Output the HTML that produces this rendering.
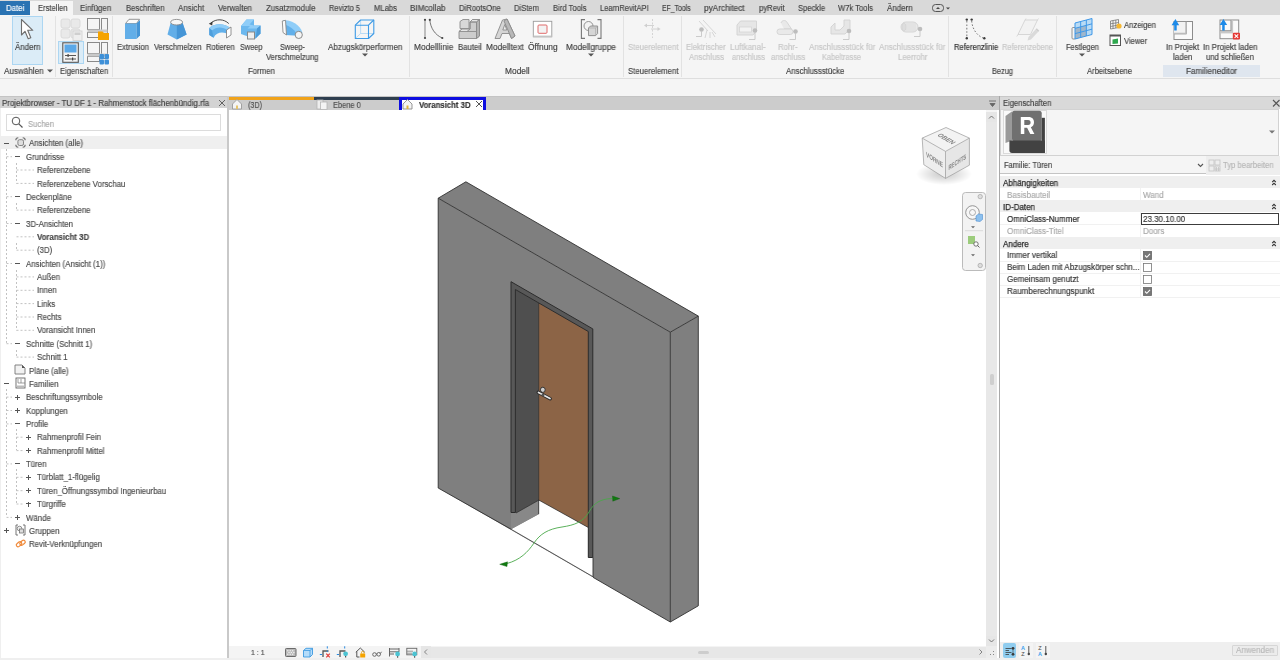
<!DOCTYPE html>
<html><head><meta charset="utf-8"><style>
html,body{margin:0;padding:0}
body{width:1280px;height:660px;position:relative;overflow:hidden;background:#f5f5f5;font-family:"Liberation Sans",sans-serif}
.t{position:absolute;white-space:pre;line-height:10px;will-change:transform;-webkit-text-stroke:0.15px currentColor}
svg{overflow:visible}
</style></head><body>
<div style="position:absolute;left:0px;top:0px;width:1280px;height:15px;background:#d9d9d9"></div>
<div style="position:absolute;left:0px;top:15px;width:1280px;height:63px;background:#f5f5f5"></div>
<div style="position:absolute;left:0px;top:78px;width:1280px;height:1px;background:#dedede"></div>
<div style="position:absolute;left:0px;top:79px;width:1280px;height:17px;background:#f5f5f5"></div>
<div style="position:absolute;left:0px;top:96px;width:1280px;height:14px;background:#d3d3d3"></div>
<div style="position:absolute;left:0px;top:96px;width:1280px;height:1px;background:#c4c4c4"></div>
<div style="position:absolute;left:0px;top:1px;width:30px;height:14px;background:#2a73b3"></div>
<div style="position:absolute;left:30px;top:1px;width:43px;height:14px;background:#f5f5f5"></div>
<div class="t" style="left:5.7px;top:3.05px;font-size:8.4px;color:#ffffff;transform:scaleX(0.935);transform-origin:0 0;">Datei</div>
<div class="t" style="left:38.0px;top:3.05px;font-size:8.4px;color:#404040;transform:scaleX(0.905);transform-origin:0 0;">Erstellen</div>
<div class="t" style="left:80.4px;top:3.05px;font-size:8.4px;color:#404040;transform:scaleX(0.944);transform-origin:0 0;">Einfügen</div>
<div class="t" style="left:125.5px;top:3.05px;font-size:8.4px;color:#404040;transform:scaleX(0.919);transform-origin:0 0;">Beschriften</div>
<div class="t" style="left:178.0px;top:3.05px;font-size:8.4px;color:#404040;transform:scaleX(0.947);transform-origin:0 0;">Ansicht</div>
<div class="t" style="left:218.0px;top:3.05px;font-size:8.4px;color:#404040;transform:scaleX(0.924);transform-origin:0 0;">Verwalten</div>
<div class="t" style="left:265.5px;top:3.05px;font-size:8.4px;color:#404040;transform:scaleX(0.941);transform-origin:0 0;">Zusatzmodule</div>
<div class="t" style="left:329.0px;top:3.05px;font-size:8.4px;color:#404040;transform:scaleX(0.888);transform-origin:0 0;">Revizto 5</div>
<div class="t" style="left:373.6px;top:3.05px;font-size:8.4px;color:#404040;transform:scaleX(0.911);transform-origin:0 0;">MLabs</div>
<div class="t" style="left:410.0px;top:3.05px;font-size:8.4px;color:#404040;transform:scaleX(0.965);transform-origin:0 0;">BIMcollab</div>
<div class="t" style="left:458.7px;top:3.05px;font-size:8.4px;color:#404040;transform:scaleX(0.914);transform-origin:0 0;">DiRootsOne</div>
<div class="t" style="left:514.0px;top:3.05px;font-size:8.4px;color:#404040;transform:scaleX(0.910);transform-origin:0 0;">DiStem</div>
<div class="t" style="left:552.5px;top:3.05px;font-size:8.4px;color:#404040;transform:scaleX(0.915);transform-origin:0 0;">Bird Tools</div>
<div class="t" style="left:600.0px;top:3.05px;font-size:8.4px;color:#404040;transform:scaleX(0.900);transform-origin:0 0;">LearnRevitAPI</div>
<div class="t" style="left:662.4px;top:3.05px;font-size:8.4px;color:#404040;transform:scaleX(0.819);transform-origin:0 0;">EF_Tools</div>
<div class="t" style="left:704.4px;top:3.05px;font-size:8.4px;color:#404040;transform:scaleX(0.980);transform-origin:0 0;">pyArchitect</div>
<div class="t" style="left:758.6px;top:3.05px;font-size:8.4px;color:#404040;transform:scaleX(0.920);transform-origin:0 0;">pyRevit</div>
<div class="t" style="left:797.7px;top:3.05px;font-size:8.4px;color:#404040;transform:scaleX(0.909);transform-origin:0 0;">Speckle</div>
<div class="t" style="left:838.0px;top:3.05px;font-size:8.4px;color:#404040;transform:scaleX(0.909);transform-origin:0 0;">W7k Tools</div>
<div class="t" style="left:886.7px;top:3.05px;font-size:8.4px;color:#404040;transform:scaleX(0.951);transform-origin:0 0;">Ändern</div>
<svg style="position:absolute;left:932px;top:4px" width="19" height="8" viewBox="0 0 19 8"><rect x="0.5" y="0.5" width="11" height="7" rx="3" fill="none" stroke="#555"/><path d="M4 5L6 3L8 5Z" fill="#444"/><path d="M14 3.5L18 3.5L16 5.5Z" fill="#444"/></svg>
<div style="position:absolute;left:55px;top:16px;width:1px;height:61px;background:#e2e2e2"></div>
<div style="position:absolute;left:112px;top:16px;width:1px;height:61px;background:#e2e2e2"></div>
<div style="position:absolute;left:409px;top:16px;width:1px;height:61px;background:#e2e2e2"></div>
<div style="position:absolute;left:623px;top:16px;width:1px;height:61px;background:#e2e2e2"></div>
<div style="position:absolute;left:681px;top:16px;width:1px;height:61px;background:#e2e2e2"></div>
<div style="position:absolute;left:948px;top:16px;width:1px;height:61px;background:#e2e2e2"></div>
<div style="position:absolute;left:1056px;top:16px;width:1px;height:61px;background:#e2e2e2"></div>
<div style="position:absolute;left:12px;top:16px;width:31px;height:49px;background:#dbecf7;border:1px solid #acd6f2;box-sizing:border-box"></div>
<svg style="position:absolute;left:20px;top:18px" width="15" height="23" viewBox="0 0 15 23"><path d="M1.5 1.5L1.5 17L5 13.3L8.2 20.8L10.8 19.7L7.7 12.3L12.8 12.3Z" fill="#fff" stroke="#6e6e6e" stroke-width="1.1" stroke-linejoin="round"/></svg>
<div class="t" style="left:14.7px;top:42.15px;font-size:8.4px;color:#404040;transform:scaleX(0.944);transform-origin:0 0;">Ändern</div>
<div class="t" style="left:4.4px;top:66.45px;font-size:8.4px;color:#404040;transform:scaleX(0.966);transform-origin:0 0;">Auswählen</div>
<svg style="position:absolute;left:47px;top:69px" width="6" height="4" viewBox="0 0 6 4"><path d="M0 0.5L6 0.5L3 3.5Z" fill="#555"/></svg>
<svg style="position:absolute;left:60px;top:18px" width="23" height="23" viewBox="0 0 23 23"><g fill="#e9e9e9" stroke="#d6d6d6" stroke-width="0.8"><rect x="1" y="1" width="9" height="9" rx="2"/><rect x="11" y="1" width="9" height="9" rx="2"/><rect x="1" y="11" width="9" height="9" rx="2"/><rect x="11" y="11" width="9" height="9" rx="2"/></g><rect x="13" y="13" width="9" height="9.5" fill="#eee" stroke="#cfcfcf" stroke-width="0.8"/><rect x="14.5" y="14.5" width="6" height="2.5" fill="#cfcfcf"/></svg>
<svg style="position:absolute;left:87px;top:18px" width="23" height="23" viewBox="0 0 23 23"><g fill="none" stroke="#8a8a8a" stroke-width="1"><rect x="0.5" y="0.5" width="12" height="11"/><rect x="14.5" y="0.5" width="6" height="16"/><rect x="0.5" y="14.5" width="12" height="5"/></g><rect x="0.5" y="11.5" width="20" height="3" fill="#c9c9c9"/><path d="M11 13.5L15.5 13.5L17 15L22 15L22 22L11 22Z" fill="#f5a300"/></svg>
<div style="position:absolute;left:58px;top:41px;width:26px;height:23px;background:#dbecf7;border:1px solid #acd6f2;box-sizing:border-box"></div>
<svg style="position:absolute;left:62px;top:42px" width="18" height="21" viewBox="0 0 18 21"><rect x="0.8" y="0.8" width="15.5" height="19.5" fill="#f3f3f3" stroke="#555" stroke-width="1.1"/><rect x="2.5" y="2.5" width="12" height="8" fill="#5aa8e8"/><g stroke="#444" stroke-width="0.9"><path d="M3 13.5H14M3 17H14"/></g><rect x="5.5" y="12" width="1.2" height="3" fill="#444"/><rect x="10" y="15.5" width="1.2" height="3" fill="#444"/></svg>
<svg style="position:absolute;left:87px;top:42px" width="23" height="23" viewBox="0 0 23 23"><g fill="none" stroke="#8a8a8a" stroke-width="1"><rect x="0.5" y="0.5" width="12" height="11"/><rect x="14.5" y="0.5" width="6" height="16"/><rect x="0.5" y="14.5" width="12" height="5"/></g><rect x="0.5" y="11.5" width="20" height="3" fill="#c9c9c9"/><g fill="#3e90d8"><rect x="12.5" y="12" width="4.5" height="5" rx="1"/><rect x="17.5" y="12" width="4.5" height="5" rx="1"/><rect x="12.5" y="17.5" width="4.5" height="5" rx="1"/><rect x="17.5" y="17.5" width="4.5" height="5" rx="1"/></g></svg>
<div class="t" style="left:59.8px;top:66.45px;font-size:8.4px;color:#404040;transform:scaleX(0.909);transform-origin:0 0;">Eigenschaften</div>
<svg style="position:absolute;left:124px;top:18px" width="17" height="23" viewBox="0 0 17 23"><path d="M1.5 5.5L5 1.3L15.5 1.3L12.5 5.5Z" fill="#fafafa" stroke="#8a8a8a" stroke-width="0.9" stroke-linejoin="round"/><rect x="1" y="5.5" width="11.5" height="15.5" fill="#62aee8"/><path d="M12.5 5.5L16 2L16 17.5L12.5 21Z" fill="#4595d6"/></svg>
<div class="t" style="left:117.0px;top:42.15px;font-size:8.4px;color:#404040;transform:scaleX(0.916);transform-origin:0 0;">Extrusion</div>
<svg style="position:absolute;left:167px;top:18px" width="21" height="23" viewBox="0 0 21 23"><path d="M3.6 5L15.6 5L19.6 16.5L9.8 21.6L0.5 16.5Z" fill="#62aee8"/><path d="M9.8 6.5L15.6 5L19.6 16.5L9.8 21.6Z" fill="#4595d6"/><ellipse cx="9.6" cy="4.2" rx="6" ry="2.8" fill="#f7f7f7" stroke="#8a8a8a" stroke-width="0.9"/></svg>
<div class="t" style="left:153.8px;top:42.15px;font-size:8.4px;color:#404040;transform:scaleX(0.903);transform-origin:0 0;">Verschmelzen</div>
<svg style="position:absolute;left:208px;top:18px" width="24" height="22" viewBox="0 0 24 22"><path d="M3 5C8 0.5 16 0.8 20.8 5.6" fill="none" stroke="#3a3a3a" stroke-width="0.9"/><path d="M0.8 5.8L4.6 3.6L4.2 7.4Z" fill="#3a3a3a"/><path d="M1.3 10C6 5 17 5 22 10L22 17.5C17 13.5 9 13 5.6 19.7L1.3 17Z" fill="#62b0ea"/><path d="M1.3 10C6 5 17 5 22 10L19.5 12C15 8.5 8 8.5 4 12.5Z" fill="#8fcdf8"/><path d="M1.3 10L4 12.5L5.6 19.7L1.3 17Z" fill="#4f9fdc"/><path d="M18.5 12L23 9L23 17L18.5 20Z" fill="#fff" stroke="#7a7a7a" stroke-width="0.8"/></svg>
<div class="t" style="left:205.6px;top:42.15px;font-size:8.4px;color:#404040;transform:scaleX(0.910);transform-origin:0 0;">Rotieren</div>
<svg style="position:absolute;left:240px;top:18px" width="22" height="23" viewBox="0 0 22 23"><path d="M1 8L6.5 1.5L14 1.5L14 7.5L20.5 7.5L20.5 15.5L15 21L1 16Z" fill="#6cb8ee"/><path d="M1 8L6.5 1.5L14 1.5L9.5 6.5L14 7.5L20.5 7.5L17 10.5L7.5 10.5L10 8Z" fill="#8fcdf8"/><path d="M17 10.5L20.5 7.5L20.5 15.5L15.5 20.5Z" fill="#4b9ad8"/><rect x="7.5" y="14" width="7" height="7" fill="#efefef" stroke="#8a8a8a" stroke-width="1"/></svg>
<div class="t" style="left:239.6px;top:42.15px;font-size:8.4px;color:#404040;transform:scaleX(0.875);transform-origin:0 0;">Sweep</div>
<svg style="position:absolute;left:281px;top:18px" width="23" height="23" viewBox="0 0 23 23"><path d="M2 2C10 2 19 6 21.5 15L16 17.5L5 17Z" fill="#8fcdf8"/><path d="M5 7C10 9 14 12 16.5 17.5L5 17Z" fill="#62b0ea"/><path d="M1.3 3L4.5 2.3L5.5 17L2 14.5Z" fill="#fafafa" stroke="#8a8a8a" stroke-width="0.9"/><circle cx="17.75" cy="16.9" r="3.6" fill="#f5f5f5" stroke="#8a8a8a" stroke-width="1"/></svg>
<div class="t" style="left:280.0px;top:42.15px;font-size:8.4px;color:#404040;transform:scaleX(0.880);transform-origin:0 0;">Sweep-</div>
<div class="t" style="left:266.2px;top:52.15px;font-size:8.4px;color:#404040;transform:scaleX(0.917);transform-origin:0 0;">Verschmelzung</div>
<svg style="position:absolute;left:354px;top:18px" width="21" height="22" viewBox="0 0 21 22"><g fill="none" stroke="#a9d4f5" stroke-width="0.8"><path d="M6.6 2V15.5H19.8M6.6 15.5L1.3 20.5"/></g><g fill="none" stroke="#3e9be6" stroke-width="1.1" stroke-linejoin="round"><path d="M1.3 7.2L6.6 2H19.8V15.5L14.5 20.5H1.3Z"/><path d="M1.3 7.2H14.5L19.8 2M14.5 7.2V20.5"/></g></svg>
<div class="t" style="left:327.5px;top:42.15px;font-size:8.4px;color:#404040;transform:scaleX(0.957);transform-origin:0 0;">Abzugskörperformen</div>
<svg style="position:absolute;left:362px;top:53px" width="6" height="4" viewBox="0 0 6 4"><path d="M0 0.5L6 0.5L3 3.5Z" fill="#555"/></svg>
<div class="t" style="left:247.5px;top:66.45px;font-size:8.4px;color:#404040;transform:scaleX(0.932);transform-origin:0 0;">Formen</div>
<svg style="position:absolute;left:423px;top:18px" width="22" height="22" viewBox="0 0 22 22"><path d="M2 2V20" stroke="#b0b0b0" stroke-width="1.6"/><path d="M6.8 1.8C7.5 10 12 17 19.3 20" fill="none" stroke="#555" stroke-width="0.8"/><g fill="#444"><circle cx="2" cy="1.8" r="1.1"/><circle cx="2" cy="20" r="1.1"/><circle cx="6.8" cy="1.8" r="1.1"/><circle cx="19.3" cy="20" r="1.1"/></g></svg>
<div class="t" style="left:413.8px;top:42.15px;font-size:8.4px;color:#404040;transform:scaleX(0.992);transform-origin:0 0;">Modelllinie</div>
<svg style="position:absolute;left:458px;top:18px" width="23" height="22" viewBox="0 0 23 22"><g stroke="#8c8c8c" stroke-width="0.9" stroke-linejoin="round"><path d="M1 13.5L4 11L12 11L12 4L14.5 1.5L21.5 1.5L21.5 18L18.5 20.5L1 20.5Z" fill="#cdcdcd"/><path d="M1 13.5L4 11L12 11L9 13.5Z" fill="#e6e6e6"/><path d="M12 4L14.5 1.5L21.5 1.5L18.5 4Z" fill="#e6e6e6"/><path d="M18.5 4L21.5 1.5L21.5 18L18.5 20.5Z" fill="#b3b3b3"/><path d="M9 13.5H18.5M18.5 4V20.5M12 11V4H18.5" fill="none"/><path d="M2 3.5L5 1.5L11 1.5L11 10.5L2 10.5Z" fill="#d8d8d8"/></g></svg>
<div class="t" style="left:457.5px;top:42.15px;font-size:8.4px;color:#404040;transform:scaleX(0.927);transform-origin:0 0;">Bauteil</div>
<svg style="position:absolute;left:494px;top:18px" width="22" height="22" viewBox="0 0 22 22"><g stroke="#8a8a8a" stroke-width="0.9" stroke-linejoin="round"><path d="M1 20.5L8.5 2L13 1L21 18L17.5 20.5L15.5 15.5L8 15.5L6 20.5Z" fill="#d5d5d5"/><path d="M13 1L21 18L17.5 20.5L10 3Z" fill="#b8b8b8"/><path d="M8.8 12L12.8 12L10.8 6.5Z" fill="#efefef"/></g></svg>
<div class="t" style="left:486.0px;top:42.15px;font-size:8.4px;color:#404040;transform:scaleX(0.989);transform-origin:0 0;">Modelltext</div>
<svg style="position:absolute;left:532px;top:20px" width="21" height="19" viewBox="0 0 21 19"><rect x="1.3" y="1.3" width="18.5" height="15.5" fill="#fff" stroke="#9a9a9a" stroke-width="0.9"/><rect x="1.3" y="15.6" width="18.5" height="1.6" fill="#c4c4c4"/><rect x="6" y="5" width="9" height="8.3" rx="1" fill="#f3f3f3" stroke="#e06a6a" stroke-width="1"/></svg>
<div class="t" style="left:528.0px;top:42.15px;font-size:8.4px;color:#404040;">Öffnung</div>
<svg style="position:absolute;left:580px;top:18px" width="22" height="22" viewBox="0 0 22 22"><path d="M5 1.6H1.4V20.4H5M17.5 1.6H21V20.4H17.5" fill="none" stroke="#777" stroke-width="1.1"/><circle cx="8.5" cy="8" r="4.5" fill="#f2f2f2" stroke="#888" stroke-width="0.9"/><path d="M8.5 10L10.5 8L17.6 8L17.6 15.6L15.6 17.6L8.5 17.6Z" fill="#d6d6d6" stroke="#888" stroke-width="0.9"/><path d="M8.5 10H15.6L17.6 8M15.6 10V17.6" fill="none" stroke="#a0a0a0" stroke-width="0.6"/></svg>
<div class="t" style="left:566.0px;top:42.15px;font-size:8.4px;color:#404040;transform:scaleX(0.985);transform-origin:0 0;">Modellgruppe</div>
<svg style="position:absolute;left:588px;top:53px" width="6" height="4" viewBox="0 0 6 4"><path d="M0 0.5L6 0.5L3 3.5Z" fill="#555"/></svg>
<div class="t" style="left:504.8px;top:66.45px;font-size:8.4px;color:#404040;">Modell</div>
<svg style="position:absolute;left:643px;top:18px" width="19" height="22" viewBox="0 0 19 22"><path d="M9.5 1V20" stroke="#d0d0d0" stroke-width="0.9" stroke-dasharray="2 1.5"/><path d="M3 7.5H11M8 11H16" stroke="#cfcfcf" stroke-width="0.9"/><path d="M1 7.5L4 5.5L4 9.5Z M17.5 11L14.5 9L14.5 13Z" fill="#cfcfcf"/></svg>
<div class="t" style="left:627.5px;top:42.15px;font-size:8.4px;color:#c6c6c6;transform:scaleX(0.927);transform-origin:0 0;">Steuerelement</div>
<div class="t" style="left:627.5px;top:66.45px;font-size:8.4px;color:#404040;transform:scaleX(0.927);transform-origin:0 0;">Steuerelement</div>
<svg style="position:absolute;left:695px;top:19px" width="22" height="22" viewBox="0 0 22 22"><path d="M4 2L13 12M8 1L21 15M12 11L10 19M15 13L15 19M17 13L20 18" stroke="#d2d2d2" stroke-width="0.9" fill="none"/><circle cx="6.5" cy="10.5" r="2.3" fill="#bdbdbd"/><path d="M6.5 12V17.5H1" stroke="#c6c6c6" stroke-width="0.9" fill="none"/></svg>
<div class="t" style="left:686.0px;top:42.15px;font-size:8.4px;color:#c6c6c6;transform:scaleX(0.905);transform-origin:0 0;">Elektrischer</div>
<div class="t" style="left:688.8px;top:52.15px;font-size:8.4px;color:#c6c6c6;transform:scaleX(0.917);transform-origin:0 0;">Anschluss</div>
<svg style="position:absolute;left:736px;top:19px" width="23" height="22" viewBox="0 0 23 22"><path d="M1 6L4.5 2L20.5 2L20.5 12L17 16L1 16Z" fill="#e6e6e6" stroke="#d2d2d2" stroke-width="0.9"/><rect x="3.5" y="8" width="12" height="5" fill="#f3f3f3" stroke="#d2d2d2" stroke-width="0.7"/><circle cx="19" cy="11.5" r="2.3" fill="#bdbdbd"/><path d="M19 13V20.5H13" stroke="#c6c6c6" stroke-width="0.9" fill="none"/></svg>
<div class="t" style="left:730.0px;top:42.15px;font-size:8.4px;color:#c6c6c6;transform:scaleX(0.968);transform-origin:0 0;">Luftkanal-</div>
<div class="t" style="left:732.0px;top:52.15px;font-size:8.4px;color:#c6c6c6;transform:scaleX(0.886);transform-origin:0 0;">anschluss</div>
<svg style="position:absolute;left:776px;top:19px" width="24" height="22" viewBox="0 0 24 22"><path d="M5 4C6 1 9 1 10.5 2.5L15.5 10L8 10" fill="#e9e9e9" stroke="#d2d2d2" stroke-width="0.9"/><rect x="1" y="10" width="16" height="5.5" rx="2.7" fill="#e9e9e9" stroke="#d2d2d2" stroke-width="0.9"/><circle cx="19.5" cy="12.5" r="2.3" fill="#bdbdbd"/><path d="M19.5 14V20.5H13.5" stroke="#c6c6c6" stroke-width="0.9" fill="none"/></svg>
<div class="t" style="left:778.0px;top:42.15px;font-size:8.4px;color:#c6c6c6;transform:scaleX(0.931);transform-origin:0 0;">Rohr-</div>
<div class="t" style="left:770.6px;top:52.15px;font-size:8.4px;color:#c6c6c6;transform:scaleX(0.923);transform-origin:0 0;">anschluss</div>
<svg style="position:absolute;left:830px;top:19px" width="23" height="22" viewBox="0 0 23 22"><path d="M1 8L5 4L5 11L10 11L14 7L14 1L20 1L20 10L15 15L1 15Z" fill="#e6e6e6" stroke="#d2d2d2" stroke-width="0.9"/><circle cx="19" cy="12" r="2.3" fill="#bdbdbd"/><path d="M19 13.5V20.5H13" stroke="#c6c6c6" stroke-width="0.9" fill="none"/></svg>
<div class="t" style="left:808.8px;top:42.15px;font-size:8.4px;color:#c6c6c6;transform:scaleX(0.949);transform-origin:0 0;">Anschlussstück für</div>
<div class="t" style="left:822.0px;top:52.15px;font-size:8.4px;color:#c6c6c6;transform:scaleX(0.882);transform-origin:0 0;">Kabeltrasse</div>
<svg style="position:absolute;left:900px;top:19px" width="23" height="22" viewBox="0 0 23 22"><rect x="1" y="3" width="17" height="10" rx="5" fill="#e9e9e9" stroke="#d2d2d2" stroke-width="0.9"/><ellipse cx="4" cy="8" rx="2" ry="4" fill="#ddd" stroke="#d2d2d2" stroke-width="0.7"/><path d="M7 4V12M9 4V12M11 4V12M13 4V12M15 4V12" stroke="#d2d2d2" stroke-width="0.5"/><circle cx="20" cy="10" r="2.3" fill="#bdbdbd"/><path d="M20 11.5V17.5H14" stroke="#c6c6c6" stroke-width="0.9" fill="none"/></svg>
<div class="t" style="left:878.8px;top:42.15px;font-size:8.4px;color:#c6c6c6;transform:scaleX(0.949);transform-origin:0 0;">Anschlussstück für</div>
<div class="t" style="left:897.5px;top:52.15px;font-size:8.4px;color:#c6c6c6;transform:scaleX(0.932);transform-origin:0 0;">Leerrohr</div>
<div class="t" style="left:786.0px;top:66.45px;font-size:8.4px;color:#404040;transform:scaleX(0.936);transform-origin:0 0;">Anschlussstücke</div>
<svg style="position:absolute;left:965px;top:18px" width="21" height="23" viewBox="0 0 21 23"><path d="M1.8 3V19" stroke="#8a8a8a" stroke-width="1.2" stroke-dasharray="1.6 1.8"/><path d="M6.7 3C7.2 10 11 17 18 20" fill="none" stroke="#6a6a6a" stroke-width="0.9" stroke-dasharray="1.6 1.8"/><g fill="#3a3a3a"><circle cx="1.8" cy="1.6" r="1.2"/><circle cx="1.8" cy="20.3" r="1.2"/><circle cx="6.7" cy="1.6" r="1.2"/><circle cx="19.3" cy="20.3" r="1.2"/></g></svg>
<div class="t" style="left:953.8px;top:42.15px;font-size:8.4px;color:#2f2f2f;transform:scaleX(0.905);transform-origin:0 0;">Referenzlinie</div>
<svg style="position:absolute;left:1016px;top:18px" width="24" height="23" viewBox="0 0 24 23"><path d="M9 2H21.5L14.5 16.5H2Z" fill="#f2f2f2" stroke="#d2d2d2" stroke-width="0.9"/><path d="M2 16.5L0.8 18.5M9 2L10 0.5M21.5 2L22.5 0.5" stroke="#d2d2d2" stroke-width="0.8"/><path d="M12.5 19L19.5 11.5L22 14L15 21.5L11.5 22.5Z" fill="#dadada"/><path d="M19.5 11.5L20.8 10.2L23.3 12.7L22 14Z" fill="#cfcfcf"/></svg>
<div class="t" style="left:1002.0px;top:42.15px;font-size:8.4px;color:#c6c6c6;transform:scaleX(0.890);transform-origin:0 0;">Referenzebene</div>
<div class="t" style="left:992.0px;top:66.45px;font-size:8.4px;color:#404040;transform:scaleX(0.884);transform-origin:0 0;">Bezug</div>
<svg style="position:absolute;left:1071px;top:18px" width="22" height="23" viewBox="0 0 22 23"><path d="M4 9.5H2Q1 9.5 1 10.5V20Q1 21 2 21H4" fill="none" stroke="#8a8a8a" stroke-width="0.9"/><path d="M4.00 5.00 L9.67 3.50 L9.67 8.83 L4.00 10.33Z" fill="#b9dbf5"/><path d="M4.00 10.33 L9.67 8.83 L9.67 14.17 L4.00 15.67Z" fill="#9fb6cb"/><path d="M4.00 15.67 L9.67 14.17 L9.67 19.50 L4.00 21.00Z" fill="#9fb6cb"/><path d="M9.67 3.50 L15.33 2.00 L15.33 7.33 L9.67 8.83Z" fill="#b9dbf5"/><path d="M9.67 8.83 L15.33 7.33 L15.33 12.67 L9.67 14.17Z" fill="#9fb6cb"/><path d="M9.67 14.17 L15.33 12.67 L15.33 18.00 L9.67 19.50Z" fill="#9fb6cb"/><path d="M15.33 2.00 L21.00 0.50 L21.00 5.83 L15.33 7.33Z" fill="#b9dbf5"/><path d="M15.33 7.33 L21.00 5.83 L21.00 11.17 L15.33 12.67Z" fill="#b9dbf5"/><path d="M15.33 12.67 L21.00 11.17 L21.00 16.50 L15.33 18.00Z" fill="#b9dbf5"/><g stroke="#3d97e8" stroke-width="1" fill="none"><path d="M4.00 5.00L4.00 21.00"/><path d="M9.67 3.50L9.67 19.50"/><path d="M15.33 2.00L15.33 18.00"/><path d="M21.00 0.50L21.00 16.50"/><path d="M4.00 5.00L21.00 0.50"/><path d="M4.00 10.33L21.00 5.83"/><path d="M4.00 15.67L21.00 11.17"/><path d="M4.00 21.00L21.00 16.50"/></g></svg>
<div class="t" style="left:1066.0px;top:42.15px;font-size:8.4px;color:#404040;transform:scaleX(0.897);transform-origin:0 0;">Festlegen</div>
<svg style="position:absolute;left:1079px;top:53px" width="6" height="4" viewBox="0 0 6 4"><path d="M0 0.5L6 0.5L3 3.5Z" fill="#555"/></svg>
<svg style="position:absolute;left:1109px;top:18px" width="13" height="13" viewBox="0 0 13 13"><g fill="none" stroke="#777" stroke-width="0.8"><path d="M1.5 3L9.5 1.5V9.5L1.5 11Z M4 2.5V10.5M6.8 2V10M1.5 5.8L9.5 4.5M1.5 8.5L9.5 7"/></g><circle cx="10" cy="8" r="2.6" fill="#f5b731"/></svg>
<div class="t" style="left:1124.0px;top:19.65px;font-size:8.4px;color:#404040;transform:scaleX(0.916);transform-origin:0 0;">Anzeigen</div>
<svg style="position:absolute;left:1109px;top:34px" width="13" height="13" viewBox="0 0 13 13"><rect x="1" y="1" width="10.5" height="10.5" fill="#fff" stroke="#555" stroke-width="1"/><rect x="1" y="1" width="10.5" height="1.5" fill="#555"/><path d="M3.5 5.5L9 4.5L9 9.5L3.5 10Z" fill="#2fa84f"/></svg>
<div class="t" style="left:1124.0px;top:35.65px;font-size:8.4px;color:#404040;transform:scaleX(0.904);transform-origin:0 0;">Viewer</div>
<div class="t" style="left:1087.0px;top:66.45px;font-size:8.4px;color:#404040;transform:scaleX(0.912);transform-origin:0 0;">Arbeitsebene</div>
<svg style="position:absolute;left:1171px;top:18px" width="23" height="23" viewBox="0 0 23 23"><rect x="3" y="3.5" width="18.5" height="18" fill="#fafafa" stroke="#8c8c8c" stroke-width="1"/><path d="M3 3.5H15.5V15.8H3" fill="#f2f2f2" stroke="#8c8c8c" stroke-width="0.9"/><path d="M15 4V16M3 15.5H15.5" stroke="#bcbcbc" stroke-width="1.6"/><path d="M4.4 1L0.6 7.3H3.2V12.6H5.7V7.3H8.2Z" fill="#1d8ae8"/></svg>
<div class="t" style="left:1165.6px;top:42.15px;font-size:8.4px;color:#404040;transform:scaleX(0.937);transform-origin:0 0;">In Projekt</div>
<div class="t" style="left:1172.5px;top:52.15px;font-size:8.4px;color:#404040;transform:scaleX(0.951);transform-origin:0 0;">laden</div>
<svg style="position:absolute;left:1218px;top:18px" width="23" height="23" viewBox="0 0 23 23"><rect x="2" y="2" width="18.7" height="18.7" fill="#fafafa" stroke="#8c8c8c" stroke-width="1"/><rect x="12.9" y="2.5" width="2.2" height="11" fill="#c8c8c8"/><rect x="2.5" y="12.6" width="12.6" height="2.8" fill="#c8c8c8"/><path d="M12.9 2V13M2 12.6H13" stroke="#8c8c8c" stroke-width="0.8"/><path d="M5.4 1L1.7 7H4.2V12.6H6.7V7H9.2Z" fill="#1d8ae8"/><rect x="14.8" y="14.7" width="7.2" height="6.9" rx="1" fill="#e53935"/><path d="M16.6 16.4L20.2 19.9M20.2 16.4L16.6 19.9" stroke="#fff" stroke-width="1.1"/></svg>
<div class="t" style="left:1202.5px;top:42.15px;font-size:8.4px;color:#404040;transform:scaleX(0.936);transform-origin:0 0;">In Projekt laden</div>
<div class="t" style="left:1206.0px;top:52.15px;font-size:8.4px;color:#404040;transform:scaleX(0.920);transform-origin:0 0;">und schließen</div>
<div style="position:absolute;left:1163px;top:65px;width:97px;height:12px;background:#dfe6ef"></div>
<div class="t" style="left:1186.0px;top:66.45px;font-size:8.4px;color:#404040;transform:scaleX(0.969);transform-origin:0 0;">Familieneditor</div>
<div class="t" style="left:1.7px;top:98.15px;font-size:8.4px;color:#404040;transform:scaleX(0.942);transform-origin:0 0;">Projektbrowser - TU DF 1 - Rahmenstock flächenbündig.rfa</div>
<svg style="position:absolute;left:218px;top:99px" width="8" height="8" viewBox="0 0 8 8"><path d="M1 1L7 7M7 1L1 7" stroke="#555" stroke-width="0.9"/></svg>
<div style="position:absolute;left:227px;top:96px;width:2px;height:564px;background:#c9c9c9"></div>
<div style="position:absolute;left:229px;top:97px;width:770px;height:13px;background:#cccccc"></div>
<div style="position:absolute;left:229px;top:97px;width:85px;height:3px;background:#f0a31b"></div>
<div style="position:absolute;left:314px;top:97px;width:85px;height:3px;background:#2e3e4f"></div>
<svg style="position:absolute;left:231px;top:98px" width="12" height="12" viewBox="0 0 12 12"><path d="M1.5 6L6 1.5L10.5 6V11H1.5Z" fill="#f4f4f4" stroke="#9a9a9a" stroke-width="0.9"/><rect x="5" y="7.5" width="2" height="3.5" fill="#e6c46a"/></svg>
<div class="t" style="left:248.0px;top:99.85px;font-size:8.4px;color:#505050;transform:scaleX(0.859);transform-origin:0 0;">(3D)</div>
<svg style="position:absolute;left:316px;top:99px" width="12" height="11" viewBox="0 0 12 11"><rect x="1" y="1" width="6" height="9" fill="#eee" stroke="#b5b5b5" stroke-width="0.8"/><rect x="4.5" y="3" width="6.5" height="7.5" fill="#f4f4f4" stroke="#b5b5b5" stroke-width="0.8"/></svg>
<div class="t" style="left:333.0px;top:99.85px;font-size:8.4px;color:#505050;transform:scaleX(0.889);transform-origin:0 0;">Ebene 0</div>
<div style="position:absolute;left:399px;top:97px;width:87px;height:13px;background:#0d0de0"></div>
<div style="position:absolute;left:402px;top:100px;width:81px;height:10px;background:#ffffff"></div>
<svg style="position:absolute;left:402px;top:98px" width="11" height="12" viewBox="0 0 11 12"><path d="M1 6L5.5 1.5L10 6V11H1Z" fill="#f4f4f4" stroke="#8a8a8a" stroke-width="0.9"/><rect x="4.5" y="7.5" width="2" height="3.5" fill="#e0b440"/></svg>
<div class="t" style="left:418.6px;top:99.85px;font-size:8.4px;color:#333;font-weight:bold;transform:scaleX(0.925);transform-origin:0 0;">Voransicht 3D</div>
<svg style="position:absolute;left:475px;top:100px" width="8" height="8" viewBox="0 0 8 8"><path d="M1 1L7 7M7 1L1 7" stroke="#555" stroke-width="1"/></svg>
<svg style="position:absolute;left:988px;top:99px" width="9" height="9" viewBox="0 0 9 9"><path d="M1 2H8M2 4.5H7L4.5 7.5Z" stroke="#666" stroke-width="0.9" fill="#666"/></svg>
<div style="position:absolute;left:997px;top:110px;width:2px;height:550px;background:#ffffff"></div>
<div style="position:absolute;left:999px;top:96px;width:1px;height:564px;background:#a9a9a9"></div>
<div style="position:absolute;left:1000px;top:96px;width:280px;height:13px;background:#d9d9d9"></div>
<div style="position:absolute;left:1000px;top:96px;width:280px;height:1px;background:#c8c8c8"></div>
<div class="t" style="left:1002.7px;top:98.15px;font-size:8.4px;color:#404040;transform:scaleX(0.910);transform-origin:0 0;">Eigenschaften</div>
<svg style="position:absolute;left:1272px;top:99px" width="8" height="9" viewBox="0 0 8 9"><path d="M1 1L7.5 7.5M7.5 1L1 7.5" stroke="#555" stroke-width="1.1"/></svg>
<div style="position:absolute;left:0px;top:108px;width:227px;height:550px;background:#ffffff"></div>
<div style="position:absolute;left:6px;top:114px;width:215px;height:17px;background:#fff;border:1px solid #dcdcdc;box-sizing:border-box"></div>
<svg style="position:absolute;left:11px;top:116px" width="13" height="13" viewBox="0 0 13 13"><circle cx="5" cy="5" r="3.8" fill="none" stroke="#555" stroke-width="1"/><path d="M7.8 7.8L11.5 11.5" stroke="#555" stroke-width="1.2"/></svg>
<div class="t" style="left:28.0px;top:118.65px;font-size:8.4px;color:#a8a8a8;transform:scaleX(0.915);transform-origin:0 0;">Suchen</div>
<div style="position:absolute;left:1px;top:136px;width:226px;height:13px;background:#efefef"></div>
<div style="position:absolute;left:4px;top:143px;width:5px;height:1.2px;background:#555"></div>
<svg style="position:absolute;left:15px;top:137px" width="11" height="11" viewBox="0 0 11 11"><g fill="none" stroke="#6e6e6e" stroke-width="1.1"><path d="M0.8 3.3Q0.8 0.8 3.3 0.8M7.7 0.8Q10.2 0.8 10.2 3.3M10.2 7.7Q10.2 10.2 7.7 10.2M3.3 10.2Q0.8 10.2 0.8 7.7"/></g><rect x="2.9" y="2.7" width="5.6" height="5.8" rx="1.6" fill="#dedede" stroke="#777" stroke-width="0.9"/></svg>
<div class="t" style="left:29.0px;top:138.45px;font-size:8.4px;color:#474747;transform:scaleX(0.935);transform-origin:0 0;">Ansichten (alle)</div>
<div style="position:absolute;left:15px;top:156px;width:5px;height:1.2px;background:#555"></div>
<div class="t" style="left:26.4px;top:151.81px;font-size:8.4px;color:#474747;transform:scaleX(0.935);transform-origin:0 0;">Grundrisse</div>
<div class="t" style="left:37.0px;top:165.17px;font-size:8.4px;color:#474747;transform:scaleX(0.935);transform-origin:0 0;">Referenzebene</div>
<div class="t" style="left:37.0px;top:178.53px;font-size:8.4px;color:#474747;transform:scaleX(0.935);transform-origin:0 0;">Referenzebene Vorschau</div>
<div style="position:absolute;left:15px;top:196px;width:5px;height:1.2px;background:#555"></div>
<div class="t" style="left:26.4px;top:191.89px;font-size:8.4px;color:#474747;transform:scaleX(0.935);transform-origin:0 0;">Deckenpläne</div>
<div class="t" style="left:37.0px;top:205.25px;font-size:8.4px;color:#474747;transform:scaleX(0.935);transform-origin:0 0;">Referenzebene</div>
<div style="position:absolute;left:15px;top:223px;width:5px;height:1.2px;background:#555"></div>
<div class="t" style="left:26.4px;top:218.61px;font-size:8.4px;color:#474747;transform:scaleX(0.935);transform-origin:0 0;">3D-Ansichten</div>
<div class="t" style="left:37.0px;top:231.97px;font-size:8.4px;color:#474747;font-weight:bold;transform:scaleX(0.935);transform-origin:0 0;">Voransicht 3D</div>
<div class="t" style="left:37.0px;top:245.33px;font-size:8.4px;color:#474747;transform:scaleX(0.935);transform-origin:0 0;">(3D)</div>
<div style="position:absolute;left:15px;top:263px;width:5px;height:1.2px;background:#555"></div>
<div class="t" style="left:26.4px;top:258.69px;font-size:8.4px;color:#474747;transform:scaleX(0.935);transform-origin:0 0;">Ansichten (Ansicht (1))</div>
<div class="t" style="left:37.0px;top:272.05px;font-size:8.4px;color:#474747;transform:scaleX(0.935);transform-origin:0 0;">Außen</div>
<div class="t" style="left:37.0px;top:285.41px;font-size:8.4px;color:#474747;transform:scaleX(0.935);transform-origin:0 0;">Innen</div>
<div class="t" style="left:37.0px;top:298.77px;font-size:8.4px;color:#474747;transform:scaleX(0.935);transform-origin:0 0;">Links</div>
<div class="t" style="left:37.0px;top:312.13px;font-size:8.4px;color:#474747;transform:scaleX(0.935);transform-origin:0 0;">Rechts</div>
<div class="t" style="left:37.0px;top:325.49px;font-size:8.4px;color:#474747;transform:scaleX(0.935);transform-origin:0 0;">Voransicht Innen</div>
<div style="position:absolute;left:15px;top:343px;width:5px;height:1.2px;background:#555"></div>
<div class="t" style="left:26.4px;top:338.85px;font-size:8.4px;color:#474747;transform:scaleX(0.935);transform-origin:0 0;">Schnitte (Schnitt 1)</div>
<div class="t" style="left:37.0px;top:352.21px;font-size:8.4px;color:#474747;transform:scaleX(0.935);transform-origin:0 0;">Schnitt 1</div>
<svg style="position:absolute;left:14px;top:364px" width="12" height="11" viewBox="0 0 12 11"><path d="M1 1H8L11 4V10H1Z" fill="#f2f2f2" stroke="#777" stroke-width="0.9"/><path d="M8 1V4H11" fill="#555"/></svg>
<div class="t" style="left:29.0px;top:365.57px;font-size:8.4px;color:#474747;transform:scaleX(0.935);transform-origin:0 0;">Pläne (alle)</div>
<div style="position:absolute;left:4px;top:383px;width:5px;height:1.2px;background:#555"></div>
<svg style="position:absolute;left:15px;top:377px" width="11" height="12" viewBox="0 0 11 12"><rect x="1" y="1" width="9" height="10" fill="#fff" stroke="#666" stroke-width="0.9"/><path d="M3 2V6H6V2M6 6H10" fill="none" stroke="#777" stroke-width="0.7"/><rect x="2" y="8.5" width="7" height="1.6" fill="#bbb"/></svg>
<div class="t" style="left:29.0px;top:378.93px;font-size:8.4px;color:#474747;transform:scaleX(0.935);transform-origin:0 0;">Familien</div>
<div style="position:absolute;left:15px;top:397px;width:5px;height:1.2px;background:#555"></div>
<div style="position:absolute;left:17px;top:395px;width:1.2px;height:5px;background:#555"></div>
<div class="t" style="left:26.4px;top:392.29px;font-size:8.4px;color:#474747;transform:scaleX(0.935);transform-origin:0 0;">Beschriftungssymbole</div>
<div style="position:absolute;left:15px;top:410px;width:5px;height:1.2px;background:#555"></div>
<div style="position:absolute;left:17px;top:408px;width:1.2px;height:5px;background:#555"></div>
<div class="t" style="left:26.4px;top:405.65px;font-size:8.4px;color:#474747;transform:scaleX(0.935);transform-origin:0 0;">Kopplungen</div>
<div style="position:absolute;left:15px;top:423px;width:5px;height:1.2px;background:#555"></div>
<div class="t" style="left:26.4px;top:419.01px;font-size:8.4px;color:#474747;transform:scaleX(0.935);transform-origin:0 0;">Profile</div>
<div style="position:absolute;left:26px;top:437px;width:5px;height:1.2px;background:#555"></div>
<div style="position:absolute;left:28px;top:435px;width:1.2px;height:5px;background:#555"></div>
<div class="t" style="left:37.0px;top:432.37px;font-size:8.4px;color:#474747;transform:scaleX(0.935);transform-origin:0 0;">Rahmenprofil Fein</div>
<div style="position:absolute;left:26px;top:450px;width:5px;height:1.2px;background:#555"></div>
<div style="position:absolute;left:28px;top:448px;width:1.2px;height:5px;background:#555"></div>
<div class="t" style="left:37.0px;top:445.73px;font-size:8.4px;color:#474747;transform:scaleX(0.935);transform-origin:0 0;">Rahmenprofil Mittel</div>
<div style="position:absolute;left:15px;top:463px;width:5px;height:1.2px;background:#555"></div>
<div class="t" style="left:26.4px;top:459.09px;font-size:8.4px;color:#474747;transform:scaleX(0.935);transform-origin:0 0;">Türen</div>
<div style="position:absolute;left:26px;top:477px;width:5px;height:1.2px;background:#555"></div>
<div style="position:absolute;left:28px;top:475px;width:1.2px;height:5px;background:#555"></div>
<div class="t" style="left:37.0px;top:472.45px;font-size:8.4px;color:#474747;transform:scaleX(0.935);transform-origin:0 0;">Türblatt_1-flügelig</div>
<div style="position:absolute;left:26px;top:490px;width:5px;height:1.2px;background:#555"></div>
<div style="position:absolute;left:28px;top:488px;width:1.2px;height:5px;background:#555"></div>
<div class="t" style="left:37.0px;top:485.81px;font-size:8.4px;color:#474747;transform:scaleX(0.935);transform-origin:0 0;">Türen_Öffnungssymbol Ingenieurbau</div>
<div style="position:absolute;left:26px;top:503px;width:5px;height:1.2px;background:#555"></div>
<div style="position:absolute;left:28px;top:502px;width:1.2px;height:5px;background:#555"></div>
<div class="t" style="left:37.0px;top:499.17px;font-size:8.4px;color:#474747;transform:scaleX(0.935);transform-origin:0 0;">Türgriffe</div>
<div style="position:absolute;left:15px;top:517px;width:5px;height:1.2px;background:#555"></div>
<div style="position:absolute;left:17px;top:515px;width:1.2px;height:5px;background:#555"></div>
<div class="t" style="left:26.4px;top:512.53px;font-size:8.4px;color:#474747;transform:scaleX(0.935);transform-origin:0 0;">Wände</div>
<div style="position:absolute;left:4px;top:530px;width:5px;height:1.2px;background:#555"></div>
<div style="position:absolute;left:6px;top:528px;width:1.2px;height:5px;background:#555"></div>
<svg style="position:absolute;left:15px;top:524px" width="11" height="12" viewBox="0 0 11 12"><path d="M3 1H1V11H3M8 1H10V11H8" fill="none" stroke="#666" stroke-width="0.9"/><circle cx="4.5" cy="4.5" r="2.3" fill="#eee" stroke="#666" stroke-width="0.7"/><rect x="4.5" y="5" width="4" height="4" fill="#ddd" stroke="#666" stroke-width="0.7"/></svg>
<div class="t" style="left:29.0px;top:525.89px;font-size:8.4px;color:#474747;transform:scaleX(0.935);transform-origin:0 0;">Gruppen</div>
<svg style="position:absolute;left:15px;top:538px" width="11" height="11" viewBox="0 0 11 11"><g fill="none" stroke="#f08a3a" stroke-width="1.2"><rect x="1" y="4.5" width="6" height="3.5" rx="1.7" transform="rotate(-40 4 6.2)"/><rect x="4.5" y="3" width="6" height="3.5" rx="1.7" transform="rotate(-40 7.5 4.7)"/></g></svg>
<div class="t" style="left:29.0px;top:539.25px;font-size:8.4px;color:#474747;transform:scaleX(0.935);transform-origin:0 0;">Revit-Verknüpfungen</div>
<svg style="position:absolute;left:0px;top:136px" width="227" height="420" viewBox="0 0 227 420"><g stroke="#c2c2c2" stroke-width="1" stroke-dasharray="2 2" fill="none" transform="translate(0,-136)"><path d="M6.5 149V342.9"/><path d="M6.5 389V516.4"/><path d="M16.5 163V183.6"/><path d="M16.5 203V210.3"/><path d="M16.5 243V250.3"/><path d="M16.5 270V330.4"/><path d="M16.5 350V357"/><path d="M16.5 429V450.1"/><path d="M16.5 469V503.5"/><path d="M6.5 156.7H12" /><path d="M16.5 170.0H34" /><path d="M16.5 183.4H34" /><path d="M6.5 196.7H12" /><path d="M16.5 210.1H34" /><path d="M6.5 223.5H12" /><path d="M16.5 236.8H34" /><path d="M16.5 250.2H34" /><path d="M6.5 263.5H12" /><path d="M16.5 276.9H34" /><path d="M16.5 290.3H34" /><path d="M16.5 303.6H34" /><path d="M16.5 317.0H34" /><path d="M16.5 330.3H34" /><path d="M6.5 343.7H12" /><path d="M16.5 357.1H34" /><path d="M6.5 397.1H12" /><path d="M6.5 410.5H12" /><path d="M6.5 423.9H12" /><path d="M16.5 437.2H23" /><path d="M16.5 450.6H23" /><path d="M6.5 463.9H12" /><path d="M16.5 477.3H23" /><path d="M16.5 490.7H23" /><path d="M16.5 504.0H23" /><path d="M6.5 517.4H12" /></g></svg>
<div style="position:absolute;left:229px;top:110px;width:757px;height:536px;background:#ffffff"></div>
<svg style="position:absolute;left:229px;top:110px" width="757" height="536" viewBox="229 110 757 536"><path d="M438.2 198.2L670.3 332.2L670.3 622L438.2 488Z" fill="#7f7f7f"/><path d="M438.2 198.2L465.9 181.8L698.3 316.1L670.3 332.2Z" fill="#7f7f7f"/><path d="M670.3 332.2L698.3 316.1L698.3 605.8L670.3 622Z" fill="#7f7f7f"/><path d="M539 500L588.3 527.5L588.3 557.5L593 557.5L593 576.7L511 529.2L539 514Z" fill="#fff"/><path d="M511 512.5L516 512.5L539 500L539 514L511 529.2Z" fill="#888"/><path d="M515.4 289.5L538.7 303L538.7 500L516 513L515.4 513Z" fill="#4f4f4f"/><path d="M538.7 303L588.5 331.5L588.5 527.5L538.7 500Z" fill="#8c6446"/><path d="M511 281.7L592.8 328.9L592.8 557.5L588.3 557.5L588.3 331.5L515.4 289.5L515.4 512.5L511 512.5Z" fill="#585858" stroke="#2c2c2c" stroke-width="1" stroke-linejoin="round"/><path d="M516 513L539 500M538.7 303V514M538.7 500L588.3 527.5M511 529.2L593 576.7" stroke="#2a2a2a" stroke-width="0.7" fill="none"/><g fill="none" stroke="#303030" stroke-width="0.9" stroke-linejoin="round"><path d="M438.2 488V198.2L465.9 181.8L698.3 316.1V605.8L670.3 622L593 577.3M511 529.2L438.2 488M438.2 198.2L670.3 332.2L698.3 316.1M670.3 332.2V622"/><path d="M593 557.5V577"/></g><g transform="translate(537,386)"><ellipse cx="5.8" cy="3.8" rx="2.4" ry="2.6" fill="#cfcfcf" stroke="#2a2a2a" stroke-width="0.9"/><path d="M1.2 6.3L13.2 12.8" stroke="#2a2a2a" stroke-width="3.4" stroke-linecap="round"/><path d="M1.5 6.4L13 12.6" stroke="#e8e8e8" stroke-width="1.7" stroke-linecap="round"/><ellipse cx="6" cy="9" rx="1.5" ry="1.2" fill="#555"/></g><path d="M507 563.5C520 560 528 552 534 543C540 534 548 529 562 527C575 525 583 522 589 512C594 503 600 499 612 498.5" fill="none" stroke="#4aa84a" stroke-width="0.9"/><path d="M499.7 564.3L507.5 561.8L507 566.6Z M619.8 498.6L612.5 496L612.8 501.2Z" fill="#117a11" stroke="#0d5e0d" stroke-width="0.4"/></svg>
<div style="will-change:transform;position:absolute;left:0;top:0">
<svg style="position:absolute;left:900px;top:115px" width="80" height="80" viewBox="900 115 80 80"><defs><radialGradient id="sh" cx="0.5" cy="0.5" r="0.5"><stop offset="0" stop-color="#000" stop-opacity="0.22"/><stop offset="1" stop-color="#000" stop-opacity="0"/></radialGradient></defs>
<ellipse cx="944" cy="174" rx="28" ry="11" fill="url(#sh)"/>
<path d="M946 127.5L969.4 138.1L945.5 151.4L922.2 138.1Z" fill="#f3f3f3"/>
<path d="M922.2 138.1L945.5 151.4L945.5 178.4L923.8 164.7Z" fill="#eeeeee"/>
<path d="M945.5 151.4L969.4 138.1L969.4 165.2L945.5 178.4Z" fill="#e6e6e6"/>
<g fill="none" stroke="#9a9a9a" stroke-width="0.7"><path d="M946 127.5L969.4 138.1L969.4 165.2L945.5 178.4L923.8 164.7L922.2 138.1Z M922.2 138.1L945.5 151.4L969.4 138.1M945.5 151.4V178.4"/></g>
<g font-family="Liberation Sans" font-size="7" font-weight="bold" fill="#858585" text-anchor="middle">
<text transform="matrix(0.85,0.55,0,1,934.5,162)" textLength="20" lengthAdjust="spacingAndGlyphs">VORNE</text>
<text transform="matrix(0.85,-0.55,0,1,957.3,164.5)" textLength="21" lengthAdjust="spacingAndGlyphs">RECHTS</text>
<text transform="matrix(0.85,0.5,-0.85,0.5,944.4,140)" textLength="18" lengthAdjust="spacingAndGlyphs">OBEN</text></g></svg>
</div>
<svg style="position:absolute;left:955px;top:185px" width="35" height="90" viewBox="955 185 35 90"><rect x="962.5" y="192.5" width="23" height="78" rx="3" fill="#f3f3f3" stroke="#b4b4b4" stroke-width="0.9"/>
<circle cx="980.2" cy="196.6" r="2.2" fill="#ddd" stroke="#999" stroke-width="0.6"/><circle cx="980.2" cy="265.5" r="2.2" fill="#ddd" stroke="#999" stroke-width="0.6"/>
<circle cx="972.5" cy="212.5" r="6.8" fill="#f7f7f7" stroke="#8a8a8a" stroke-width="0.9"/><circle cx="972.5" cy="212.5" r="3" fill="none" stroke="#999" stroke-width="0.8"/>
<path d="M976 216L978.5 214L982.5 214.5L982.5 219.5L980 221.5L976 221Z" fill="#8cc0ee" stroke="#4f8fd0" stroke-width="0.6"/>
<path d="M971 226.3H975L973 228.3Z M971 254.3H975L973 256.3Z" fill="#666"/>
<path d="M965 230.7H983" stroke="#dadada" stroke-width="1"/>
<rect x="968" y="236" width="7" height="8" fill="#9ccc7c"/><circle cx="976" cy="244" r="2.2" fill="#fff" stroke="#555" stroke-width="0.8"/><path d="M977.5 245.5L979.5 247.5" stroke="#555" stroke-width="0.9"/></svg>
<div style="position:absolute;left:986px;top:112px;width:11px;height:534px;background:#e8e8e8"></div>
<div style="position:absolute;left:990px;top:374px;width:3.5px;height:11px;background:#cfcfcf;border-radius:1.5px"></div>
<div style="position:absolute;left:986px;top:112px;width:11px;height:10px;background:#e6e6e6"></div>
<div style="position:absolute;left:986px;top:636px;width:11px;height:10px;background:#e6e6e6"></div>
<svg style="position:absolute;left:986px;top:112px" width="11" height="10" viewBox="0 0 11 10"><path d="M3 6.5L5.5 4L8 6.5" fill="none" stroke="#666" stroke-width="0.9"/></svg>
<svg style="position:absolute;left:986px;top:636px" width="11" height="10" viewBox="0 0 11 10"><path d="M3 3.5L5.5 6L8 3.5" fill="none" stroke="#666" stroke-width="0.9"/></svg>
<div style="position:absolute;left:229px;top:646px;width:757px;height:12px;background:#f4f4f4"></div>
<div class="t" style="left:250.5px;top:647.63px;font-size:7px;color:#555;transform:scaleX(1.006);transform-origin:0 0;">1 : 1</div>
<svg style="position:absolute;left:229px;top:646px" width="260" height="14" viewBox="229 646 260 14"><rect x="285.5" y="648.5" width="10.5" height="8" rx="0.8" fill="#b9b9b9" stroke="#6a6a6a" stroke-width="1"/><g fill="#f0f0f0"><circle cx="287.8" cy="650.8" r="0.75"/><circle cx="290.2" cy="650.8" r="0.75"/><circle cx="292.6" cy="650.8" r="0.75"/><circle cx="289" cy="652.5" r="0.75"/><circle cx="291.4" cy="652.5" r="0.75"/><circle cx="293.8" cy="652.5" r="0.75"/><circle cx="287.8" cy="654.2" r="0.75"/><circle cx="290.2" cy="654.2" r="0.75"/><circle cx="292.6" cy="654.2" r="0.75"/></g>
<path d="M303.5 650.5L306 648.3H312.5V654.5L310 657H303.5Z" fill="#b4dcfa" stroke="#3b98e0" stroke-width="0.9"/><path d="M303.5 650.5H310V657M310 650.5L312.5 648.3" fill="none" stroke="#3b98e0" stroke-width="0.8"/>
<path d="M323 657V651H328.5" fill="none" stroke="#555" stroke-width="1.3"/><path d="M327.3 646.3V648.5M327.3 650.5V652M319.8 654.5H322" stroke="#2a8ae0" stroke-width="1"/><path d="M326.3 653.6L329.8 657.3M329.8 653.6L326.3 657.3" stroke="#e53935" stroke-width="1.2"/>
<path d="M340 657V651H345.5" fill="none" stroke="#555" stroke-width="1.3"/><path d="M344.7 646.3V648.5M336.8 654.5H339" stroke="#2a8ae0" stroke-width="1"/><circle cx="345.6" cy="653.8" r="2.4" fill="#4cc3d2"/><rect x="345" y="656" width="1.2" height="1.5" fill="#555"/>
<path d="M355.8 652.3L360.3 648L364.8 652.3M356.8 651.5V657H359.5" fill="none" stroke="#555" stroke-width="1"/><path d="M361.5 653.5V652.5Q361.5 651.3 362.7 651.3Q363.9 651.3 363.9 652.5V653.5" fill="none" stroke="#e59a00" stroke-width="0.8"/><rect x="360.2" y="653.5" width="5" height="4" fill="#f5a300"/>
<g fill="none" stroke="#666" stroke-width="1"><circle cx="374.5" cy="654.5" r="1.8"/><circle cx="378.7" cy="654.3" r="1.8"/><path d="M376.3 654.2L377 654.1M380.3 653.5L381.5 651.8"/></g>
<path d="M389.5 648V656.5M389.5 649H399M389.5 651.8H399M399 648V651.8M389.5 654H394" fill="none" stroke="#666" stroke-width="1"/><circle cx="397.6" cy="654" r="2.4" fill="#4cc3d2"/><rect x="397" y="656.2" width="1.2" height="1.5" fill="#555"/>
<rect x="406.8" y="648.3" width="10" height="6.5" fill="#f4f4f4" stroke="#666" stroke-width="0.9"/><path d="M406.8 651.2H413M406.8 653.2H412" stroke="#888" stroke-width="0.9"/><circle cx="414.6" cy="654" r="2.4" fill="#4cc3d2"/><rect x="414" y="656.2" width="1.2" height="1.5" fill="#555"/></svg>
<div style="position:absolute;left:421px;top:646px;width:10px;height:12px;background:#e6e6e6"></div>
<svg style="position:absolute;left:421px;top:646px" width="10" height="12" viewBox="0 0 10 12"><path d="M6 3.5L3.5 6L6 8.5" fill="none" stroke="#777" stroke-width="0.9"/></svg>
<div style="position:absolute;left:431px;top:646.5px;width:555px;height:11.5px;background:#e7e7e7"></div>
<div style="position:absolute;left:698px;top:650.5px;width:11px;height:3px;background:#cdcdcd;border-radius:1.5px"></div>
<svg style="position:absolute;left:975px;top:646px" width="11" height="12" viewBox="0 0 11 12"><path d="M4.5 3.5L7 6L4.5 8.5" fill="none" stroke="#777" stroke-width="0.9"/></svg>
<div style="position:absolute;left:986px;top:646px;width:11px;height:12px;background:#ececec"></div>
<svg style="position:absolute;left:986px;top:646px" width="11" height="12" viewBox="0 0 11 12"><g fill="#888"><rect x="7" y="5" width="1" height="1"/><rect x="7" y="8" width="1" height="1"/><rect x="4" y="8" width="1" height="1"/></g></svg>
<div style="position:absolute;left:0px;top:658px;width:1280px;height:2px;background:#efefef"></div>
<div style="position:absolute;left:0px;top:108px;width:1px;height:550px;background:#efefef"></div>
<div style="position:absolute;left:1000px;top:109px;width:280px;height:549px;background:#ffffff"></div>
<div style="position:absolute;left:1000px;top:109px;width:279px;height:47px;background:#f5f5f5;border:1px solid #d2d2d2;box-sizing:border-box"></div>
<div style="position:absolute;left:1003px;top:110px;width:44px;height:44px;background:#fafafa;border:1px solid #dadada;box-sizing:border-box"></div>
<svg style="position:absolute;left:1002px;top:110px" width="45" height="44" viewBox="0 0 45 44"><path d="M3.5 6L10.2 1.3L10.2 30.6L3.5 33Z" fill="#9a9a9a"/><rect x="10" y="0.7" width="29.7" height="30.5" rx="2.5" fill="#707070"/><path d="M7.4 30.6H42.9V42.9H10Q7.4 42.9 7.4 40.3Z" fill="#424242"/><rect x="39.7" y="7.8" width="3.2" height="35" fill="#424242"/><path d="M18.8 7H26.5C30.5 7 32 9.5 32 12.3C32 14.8 30.8 16.5 28.8 17.2L32.4 24H28.3L25.1 17.8H22.3V24H18.8Z M22.3 10V14.9H26.1C27.9 14.9 28.6 13.9 28.6 12.4C28.6 10.9 27.9 10 26.1 10Z" fill="#fff" fill-rule="evenodd"/></svg>
<svg style="position:absolute;left:1269px;top:130px" width="7" height="4" viewBox="0 0 7 4"><path d="M0 0.5H6L3 3.5Z" fill="#777"/></svg>
<div style="position:absolute;left:1000px;top:156px;width:206px;height:17px;background:#f5f5f5"></div>
<div style="position:absolute;left:1000px;top:173px;width:206px;height:1px;background:#c4c4c4"></div>
<div class="t" style="left:1003.9px;top:160.45px;font-size:8.4px;color:#404040;transform:scaleX(0.901);transform-origin:0 0;">Familie: Türen</div>
<svg style="position:absolute;left:1197px;top:163px" width="7" height="5" viewBox="0 0 7 5"><path d="M1 1L3.5 3.5L6 1" fill="none" stroke="#555" stroke-width="1.1"/></svg>
<div style="position:absolute;left:1206px;top:156px;width:74px;height:19px;background:#eeeeee"></div>
<svg style="position:absolute;left:1208px;top:159px" width="13" height="13" viewBox="0 0 13 13"><g fill="none" stroke="#c4c4c4" stroke-width="0.8"><rect x="1" y="1" width="5" height="5"/><rect x="7" y="1" width="5" height="5"/><rect x="1" y="7" width="5" height="5"/><rect x="7" y="7" width="5" height="5"/><path d="M8.5 8V12M10.5 8V12M7 10H12"/></g></svg>
<div class="t" style="left:1223.3px;top:160.45px;font-size:8.4px;color:#b5b5b5;transform:scaleX(0.915);transform-origin:0 0;">Typ bearbeiten</div>
<div style="position:absolute;left:1000px;top:176px;width:280px;height:12px;background:#efefef"></div>
<div class="t" style="left:1002.8px;top:178.20px;font-size:8.4px;color:#2a2a2a;transform:scaleX(0.955);transform-origin:0 0;-webkit-text-stroke:0.25px #2a2a2a;">Abhängigkeiten</div>
<svg style="position:absolute;left:1271px;top:178.5px" width="6" height="7" viewBox="0 0 6 7"><path d="M1.2 3.2L3 1.4L4.8 3.2M1.2 6L3 4.2L4.8 6" fill="none" stroke="#333" stroke-width="1.1"/></svg>
<div style="position:absolute;left:1000px;top:200px;width:280px;height:1px;background:#f1f1f1"></div>
<div style="position:absolute;left:1140px;top:188px;width:1px;height:12px;background:#f1f1f1"></div>
<div class="t" style="left:1007.0px;top:189.50px;font-size:8.4px;color:#a8a8a8;transform:scaleX(0.955);transform-origin:0 0;">Basisbauteil</div>
<div class="t" style="left:1142.7px;top:189.50px;font-size:8.4px;color:#a8a8a8;transform:scaleX(0.955);transform-origin:0 0;">Wand</div>
<div style="position:absolute;left:1000px;top:200px;width:280px;height:12px;background:#efefef"></div>
<div class="t" style="left:1002.8px;top:202.40px;font-size:8.4px;color:#2a2a2a;transform:scaleX(0.955);transform-origin:0 0;-webkit-text-stroke:0.25px #2a2a2a;">ID-Daten</div>
<svg style="position:absolute;left:1271px;top:202.5px" width="6" height="7" viewBox="0 0 6 7"><path d="M1.2 3.2L3 1.4L4.8 3.2M1.2 6L3 4.2L4.8 6" fill="none" stroke="#333" stroke-width="1.1"/></svg>
<div style="position:absolute;left:1000px;top:224px;width:280px;height:1px;background:#f1f1f1"></div>
<div style="position:absolute;left:1140px;top:212px;width:1px;height:12px;background:#f1f1f1"></div>
<div class="t" style="left:1007.0px;top:213.70px;font-size:8.4px;color:#2a2a2a;transform:scaleX(0.955);transform-origin:0 0;-webkit-text-stroke:0.2px #2a2a2a;">OmniClass-Nummer</div>
<div style="position:absolute;left:1141px;top:213px;width:138px;height:12px;background:#fff;border:1px solid #3c3c3c;box-sizing:border-box"></div>
<div class="t" style="left:1142.5px;top:213.70px;font-size:8.4px;color:#333;transform:scaleX(0.955);transform-origin:0 0;">23.30.10.00</div>
<div style="position:absolute;left:1000px;top:237px;width:280px;height:1px;background:#f1f1f1"></div>
<div style="position:absolute;left:1140px;top:225px;width:1px;height:12px;background:#f1f1f1"></div>
<div class="t" style="left:1007.0px;top:225.80px;font-size:8.4px;color:#a8a8a8;transform:scaleX(0.955);transform-origin:0 0;">OmniClass-Titel</div>
<div class="t" style="left:1142.7px;top:225.80px;font-size:8.4px;color:#a8a8a8;transform:scaleX(0.955);transform-origin:0 0;">Doors</div>
<div style="position:absolute;left:1000px;top:237px;width:280px;height:12px;background:#efefef"></div>
<div class="t" style="left:1002.8px;top:238.70px;font-size:8.4px;color:#2a2a2a;transform:scaleX(0.955);transform-origin:0 0;-webkit-text-stroke:0.25px #2a2a2a;">Andere</div>
<svg style="position:absolute;left:1271px;top:239.5px" width="6" height="7" viewBox="0 0 6 7"><path d="M1.2 3.2L3 1.4L4.8 3.2M1.2 6L3 4.2L4.8 6" fill="none" stroke="#333" stroke-width="1.1"/></svg>
<div style="position:absolute;left:1000px;top:261px;width:280px;height:1px;background:#f1f1f1"></div>
<div style="position:absolute;left:1140px;top:249px;width:1px;height:12px;background:#f1f1f1"></div>
<div class="t" style="left:1007.0px;top:250.00px;font-size:8.4px;color:#333;transform:scaleX(0.955);transform-origin:0 0;">Immer vertikal</div>
<svg style="position:absolute;left:1143px;top:251px" width="9" height="9" viewBox="0 0 9 9"><rect x="0.5" y="0.5" width="8" height="8" fill="#777" stroke="#666" stroke-width="0.8"/><path d="M2 4.5L3.8 6.3L7 2.8" fill="none" stroke="#fff" stroke-width="1.1"/></svg>
<div style="position:absolute;left:1000px;top:273px;width:280px;height:1px;background:#f1f1f1"></div>
<div style="position:absolute;left:1140px;top:261px;width:1px;height:12px;background:#f1f1f1"></div>
<div class="t" style="left:1007.0px;top:262.10px;font-size:8.4px;color:#333;transform:scaleX(0.955);transform-origin:0 0;">Beim Laden mit Abzugskörper schn...</div>
<svg style="position:absolute;left:1143px;top:263px" width="9" height="9" viewBox="0 0 9 9"><rect x="0.5" y="0.5" width="8" height="8" fill="#fff" stroke="#777" stroke-width="0.8"/></svg>
<div style="position:absolute;left:1000px;top:285px;width:280px;height:1px;background:#f1f1f1"></div>
<div style="position:absolute;left:1140px;top:273px;width:1px;height:12px;background:#f1f1f1"></div>
<div class="t" style="left:1007.0px;top:274.20px;font-size:8.4px;color:#333;transform:scaleX(0.955);transform-origin:0 0;">Gemeinsam genutzt</div>
<svg style="position:absolute;left:1143px;top:275px" width="9" height="9" viewBox="0 0 9 9"><rect x="0.5" y="0.5" width="8" height="8" fill="#fff" stroke="#777" stroke-width="0.8"/></svg>
<div style="position:absolute;left:1000px;top:297px;width:280px;height:1px;background:#f1f1f1"></div>
<div style="position:absolute;left:1140px;top:285px;width:1px;height:12px;background:#f1f1f1"></div>
<div class="t" style="left:1007.0px;top:286.30px;font-size:8.4px;color:#333;transform:scaleX(0.955);transform-origin:0 0;">Raumberechnungspunkt</div>
<svg style="position:absolute;left:1143px;top:287px" width="9" height="9" viewBox="0 0 9 9"><rect x="0.5" y="0.5" width="8" height="8" fill="#777" stroke="#666" stroke-width="0.8"/><path d="M2 4.5L3.8 6.3L7 2.8" fill="none" stroke="#fff" stroke-width="1.1"/></svg>
<div style="position:absolute;left:1000px;top:642px;width:280px;height:16px;background:#efefef"></div>
<div style="position:absolute;left:1002.5px;top:643px;width:13.5px;height:15px;background:#90cdef;border-radius:2px"></div>
<svg style="position:absolute;left:1003px;top:644px" width="13" height="13" viewBox="0 0 13 13"><path d="M2.5 4.5H8.5M2.5 6.5H6M2.5 8.5H8.5M2.5 10.5H6" stroke="#3a3a3a" stroke-width="0.8"/><circle cx="10" cy="4.3" r="1.4" fill="#3a3a3a"/><circle cx="10" cy="10.3" r="1.4" fill="#3a3a3a"/><path d="M10 4.3V10.3" stroke="#3a3a3a" stroke-width="0.6"/></svg>
<div style="position:absolute;left:1019px;top:643px;width:14px;height:15px;background:#f4f4f4"></div>
<svg style="position:absolute;left:1019px;top:644px" width="14" height="13" viewBox="0 0 14 13"><text x="2" y="6" font-family="Liberation Sans" font-size="5.5" fill="#3ba0ee" font-weight="bold">A</text><text x="2.2" y="11.5" font-family="Liberation Sans" font-size="5.5" fill="#444">Z</text><path d="M9.8 2V10" stroke="#444" stroke-width="0.9"/><circle cx="9.8" cy="10" r="1.2" fill="#444"/></svg>
<div style="position:absolute;left:1035.5px;top:643px;width:14px;height:15px;background:#f4f4f4"></div>
<svg style="position:absolute;left:1035.5px;top:644px" width="14" height="13" viewBox="0 0 14 13"><text x="2.2" y="6" font-family="Liberation Sans" font-size="5.5" fill="#444">Z</text><text x="2" y="11.5" font-family="Liberation Sans" font-size="5.5" fill="#3ba0ee" font-weight="bold">A</text><path d="M9.8 2V10" stroke="#444" stroke-width="0.9"/><circle cx="9.8" cy="10" r="1.2" fill="#444"/></svg>
<div style="position:absolute;left:1231.5px;top:644.5px;width:46px;height:11px;background:#ececec;border:1px solid #d6d6d6;box-sizing:border-box;border-radius:1px"></div>
<div class="t" style="left:1236.0px;top:645.15px;font-size:8.4px;color:#b8b8b8;transform:scaleX(0.960);transform-origin:0 0;">Anwenden</div>
</body></html>
